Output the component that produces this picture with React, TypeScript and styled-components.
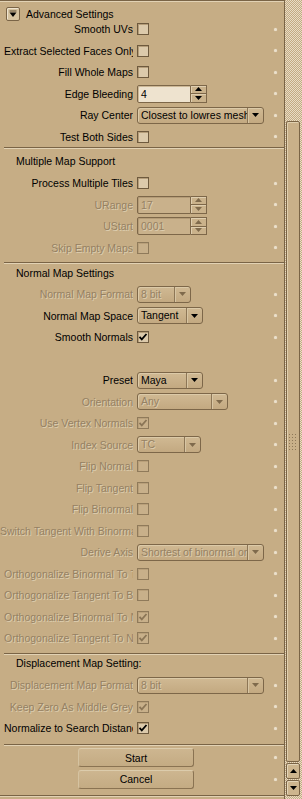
import React from 'react';
import styled, { createGlobalStyle, css } from 'styled-components';

const BG = '#c6ad85';
const DARK = '#7a6446';
const LIGHT = '#e2d2b4';
const DIS = '#958163';
const DIS_SHADOW = '#ddcdb0';

const GlobalStyle = createGlobalStyle`
  html, body { margin: 0; padding: 0; }
  body {
    background: ${BG};
    font-family: "Liberation Sans", Arial, sans-serif;
    font-size: 10.5px;
    color: #000;
    overflow: hidden;
  }
`;

const Window = styled.div`
  display: flex;
  width: 302px;
  height: 799px;
  background: ${BG};
  overflow: hidden;
`;

const Main = styled.div`
  width: 284px;
  flex: none;
  display: flex;
  flex-direction: column;
`;

const Edge = styled.div<{ $mt?: number; $ml?: number }>`
  flex: none;
  height: 0;
  border-top: 1px solid ${DARK};
  border-bottom: 1px solid ${LIGHT};
  margin-top: ${(p) => p.$mt ?? 0}px;
  margin-left: ${(p) => p.$ml ?? 0}px;
`;

const CollapseHeader = styled.div`
  flex: none;
  height: 21.5px;
  margin-top: 1px;
  margin-bottom: -6.25px;
  display: flex;
  align-items: center;
  gap: 6px;
  padding-left: 6px;
`;

const CollapseButton = styled.span`
  width: 14px;
  height: 14px;
  box-sizing: border-box;
  border: 1px solid ${DARK};
  border-radius: 2px;
  background: #d6c3a0;
  box-shadow: inset 1px 1px 0 #efe4cf;
  display: flex;
  align-items: center;
  justify-content: center;
`;

const SectionTitle = styled.div<{ $mt?: number }>`
  flex: none;
  height: 17px;
  margin-top: ${(p) => p.$mt ?? 0}px;
  padding-left: 16px;
  display: flex;
  align-items: center;
`;

const RowList = styled.div<{ $mt?: number }>`
  flex: none;
  display: flex;
  flex-direction: column;
  margin-top: ${(p) => p.$mt ?? 0}px;
`;

const Row = styled.div`
  height: 21.5px;
  display: grid;
  grid-template-columns: 129px 1fr 3px;
  column-gap: 4px;
  padding: 0 7px 0 4px;
  align-items: center;
`;

const ButtonRow = styled.div`
  height: 21.5px;
  display: grid;
  grid-template-columns: 116px 1fr 3px;
  padding: 0 7px 0 78px;
  align-items: center;
`;

const disabledText = css`
  color: ${DIS};
  text-shadow: 1px 1px 0 ${DIS_SHADOW};
`;

const Label = styled.span<{ $disabled?: boolean; $bleed?: boolean }>`
  white-space: nowrap;
  overflow: hidden;
  text-align: right;
  line-height: 14px;
  margin-left: ${(p) => (p.$bleed ? -4 : 0)}px;
  ${(p) => p.$disabled && disabledText}
`;

const Dot = styled.span`
  width: 3px;
  height: 3px;
  border-radius: 50%;
  background: #ebe0cc;
  box-shadow: 0 0 1px #e6d9c1;
`;

const Box = styled.span<{ $disabled?: boolean }>`
  width: 12px;
  height: 12px;
  box-sizing: border-box;
  border: 1px solid ${(p) => (p.$disabled ? '#8f7a5a' : '#6e5a3e')};
  background: ${(p) => (p.$disabled ? '#c8b08a' : '#dccaab')};
  box-shadow: inset 1px 1px 0 ${(p) => (p.$disabled ? '#b9a07a' : '#b59d79')};
  display: flex;
  align-items: center;
  justify-content: center;
`;

const DropBox = styled.div<{ $w: number }>`
  width: ${(p) => p.$w}px;
  height: 17px;
  box-sizing: border-box;
  border: 1px solid #7d6749;
  border-radius: 3px;
  background: linear-gradient(#d0b993, #c3a981);
  box-shadow: inset 1px 1px 0 #dccaa8;
  display: flex;
  overflow: hidden;
`;

const DropText = styled.span<{ $disabled?: boolean }>`
  flex: 1;
  min-width: 0;
  white-space: nowrap;
  overflow: hidden;
  padding-left: 3px;
  line-height: 15px;
  ${(p) => p.$disabled && disabledText}
`;

const DropArrow = styled.span`
  width: 15px;
  flex: none;
  border-left: 1px solid #8d7656;
  box-shadow: inset 1px 0 0 #d8c6a4;
  display: flex;
  align-items: center;
  justify-content: center;
`;

const Spin = styled.div`
  display: flex;
  height: 18px;
`;

const SpinField = styled.div<{ $disabled?: boolean }>`
  width: 54px;
  box-sizing: border-box;
  border: 1px solid #7d6749;
  border-radius: 2px 0 0 2px;
  background: ${(p) => (p.$disabled ? '#c9b18b' : '#eee3cf')};
  box-shadow: inset 1px 1px 0 ${(p) => (p.$disabled ? '#b59c77' : '#cdb896')};
  padding-left: 3px;
  line-height: 16px;
  ${(p) => p.$disabled && disabledText}
`;

const SpinButtons = styled.div`
  width: 16px;
  display: flex;
  flex-direction: column;
`;

const SpinBtn = styled.span`
  flex: 1;
  box-sizing: border-box;
  border: 1px solid #7d6749;
  border-left: none;
  background: #cab28b;
  box-shadow: inset 1px 1px 0 #dfceaf;
  display: flex;
  align-items: center;
  justify-content: center;
  & + & { border-top: none; }
`;

const PushButton = styled.button`
  height: 19px;
  box-sizing: border-box;
  border: 1px solid #8a7352;
  border-top-color: #dcccac;
  border-left-color: #d5c3a1;
  border-radius: 3px;
  background: linear-gradient(#cdb690, #c4ab83);
  font: inherit;
  color: #000;
  padding: 0;
  line-height: 16px;
  text-align: center;
`;

const Spacer = styled.div`
  height: 21.5px;
`;

const ScrollBar = styled.div`
  width: 18px;
  flex: none;
  box-sizing: border-box;
  border-left: 1px solid ${DARK};
  background: repeating-conic-gradient(#e8dcc6 0 25%, #c3aa82 0 50%) 0 0 / 2px 2px;
  display: flex;
  flex-direction: column;
  padding: 121px 2px 3px 1px;
`;

const Thumb = styled.div`
  flex: 1;
  box-sizing: border-box;
  border: 1px solid ${DARK};
  border-radius: 2px;
  background: #c9b089;
  box-shadow: inset 1px 1px 0 #e0cfae;
  display: flex;
  align-items: center;
  justify-content: center;
`;

const Grip = styled.span`
  width: 10px;
  height: 18px;
  background: radial-gradient(circle, #8e7858 0.7px, transparent 0.9px) 0 0 / 3px 3px;
`;

const ScrollBtn = styled.div`
  height: 16px;
  margin-top: 1px;
  box-sizing: border-box;
  border: 1px solid ${DARK};
  border-radius: 2px;
  background: #cdb58e;
  box-shadow: inset 1px 1px 0 #e4d5b8;
  display: flex;
  align-items: center;
  justify-content: center;
`;

const TriDown = ({ color = '#000' }: { color?: string }) => (
  <svg width="7" height="4" viewBox="0 0 7 4">
    <polygon points="0,0 7,0 3.5,4" fill={color} />
  </svg>
);

const TriUp = ({ color = '#000' }: { color?: string }) => (
  <svg width="7" height="4" viewBox="0 0 7 4">
    <polygon points="0,4 7,4 3.5,0" fill={color} />
  </svg>
);

const Check = ({ disabled }: { disabled?: boolean }) => (
  <svg width="10" height="10" viewBox="0 0 10 10">
    <polyline
      points="1.5,4.8 3.8,7.3 8.5,2"
      fill="none"
      stroke={disabled ? '#8a7556' : '#000'}
      strokeWidth="1.8"
    />
  </svg>
);

const CheckBox = ({ checked, disabled }: { checked?: boolean; disabled?: boolean }) => (
  <Box $disabled={disabled}>{checked && <Check disabled={disabled} />}</Box>
);

const Dropdown = ({ w, value, disabled }: { w: number; value: string; disabled?: boolean }) => (
  <DropBox $w={w}>
    <DropText $disabled={disabled}>{value}</DropText>
    <DropArrow>
      <TriDown color={disabled ? '#7f6a4c' : '#000'} />
    </DropArrow>
  </DropBox>
);

const Spinner = ({ value, disabled }: { value: string; disabled?: boolean }) => (
  <Spin>
    <SpinField $disabled={disabled}>{value}</SpinField>
    <SpinButtons>
      <SpinBtn>
        <TriUp color={disabled ? '#7f6a4c' : '#000'} />
      </SpinBtn>
      <SpinBtn>
        <TriDown color={disabled ? '#7f6a4c' : '#000'} />
      </SpinBtn>
    </SpinButtons>
  </Spin>
);

type Ctl = React.ReactNode;

const ControlCell = styled.span`
  display: flex;
`;

const Field = ({
  label,
  disabled,
  bleed,
  children,
}: {
  label: string;
  disabled?: boolean;
  bleed?: boolean;
  children?: Ctl;
}) => (
  <Row>
    <Label $disabled={disabled} $bleed={bleed}>{label}</Label>
    <ControlCell>{children}</ControlCell>
    <Dot />
  </Row>
);

export default function App() {
  return (
    <>
      <GlobalStyle />
      <Window>
        <Main>
          <Edge />
          <CollapseHeader>
            <CollapseButton>
              <svg width="10" height="8" viewBox="0 0 10 8">
                <line x1="1.5" y1="1" x2="8.5" y2="1" stroke="#5b4a33" strokeWidth="1" />
                <polygon points="1.5,2.5 8.5,2.5 5,7" fill="#000" />
              </svg>
            </CollapseButton>
            <span>Advanced Settings</span>
          </CollapseHeader>
          <RowList>
            <Field label="Smooth UVs"><CheckBox /></Field>
            <Field label="Extract Selected Faces Only"><CheckBox /></Field>
            <Field label="Fill Whole Maps"><CheckBox /></Field>
            <Field label="Edge Bleeding"><Spinner value="4" /></Field>
            <Field label="Ray Center"><Dropdown w={127} value="Closest to lowres mesh" /></Field>
            <Field label="Test Both Sides"><CheckBox /></Field>
          </RowList>
          <Edge $ml={4} />

          <SectionTitle $mt={3.25}>Multiple Map Support</SectionTitle>
          <RowList $mt={2.75}>
            <Field label="Process Multiple Tiles"><CheckBox /></Field>
            <Field label="URange" disabled><Spinner value="17" disabled /></Field>
            <Field label="UStart" disabled><Spinner value="0001" disabled /></Field>
            <Field label="Skip Empty Maps" disabled><CheckBox disabled /></Field>
          </RowList>
          <Edge $mt={3.75} $ml={4} />

          <SectionTitle>Normal Map Settings</SectionTitle>
          <RowList $mt={2.5}>
            <Field label="Normal Map Format" disabled><Dropdown w={54} value="8 bit" disabled /></Field>
            <Field label="Normal Map Space"><Dropdown w={66} value="Tangent" /></Field>
            <Field label="Smooth Normals"><CheckBox checked /></Field>
            <Spacer />
            <Field label="Preset"><Dropdown w={66} value="Maya" /></Field>
            <Field label="Orientation" disabled><Dropdown w={91} value="Any" disabled /></Field>
            <Field label="Use Vertex Normals" disabled><CheckBox checked disabled /></Field>
            <Field label="Index Source" disabled><Dropdown w={64} value="TC" disabled /></Field>
            <Field label="Flip Normal" disabled><CheckBox disabled /></Field>
            <Field label="Flip Tangent" disabled><CheckBox disabled /></Field>
            <Field label="Flip Binormal" disabled><CheckBox disabled /></Field>
            <Field label="Switch Tangent With Binormal" disabled bleed><CheckBox disabled /></Field>
            <Field label="Derive Axis" disabled><Dropdown w={127} value="Shortest of binormal or tangent" disabled /></Field>
            <Field label="Orthogonalize Binormal To Tangent" disabled><CheckBox disabled /></Field>
            <Field label="Orthogonalize Tangent To Binormal" disabled><CheckBox disabled /></Field>
            <Field label="Orthogonalize Binormal To Normal" disabled><CheckBox checked disabled /></Field>
            <Field label="Orthogonalize Tangent To Normal" disabled><CheckBox checked disabled /></Field>
          </RowList>
          <Edge $mt={3.5} $ml={4} />

          <SectionTitle>Displacement Map Setting:</SectionTitle>
          <RowList $mt={2.75}>
            <Field label="Displacement Map Format" disabled><Dropdown w={127} value="8 bit" disabled /></Field>
            <Field label="Keep Zero As Middle Grey" disabled><CheckBox checked disabled /></Field>
            <Field label="Normalize to Search Distance"><CheckBox checked /></Field>
          </RowList>
          <Edge $mt={5.25} $ml={4} />

          <RowList $mt={1}>
            <ButtonRow>
              <PushButton>Start</PushButton>
              <span />
              <Dot />
            </ButtonRow>
            <ButtonRow>
              <PushButton>Cancel</PushButton>
              <span />
              <Dot />
            </ButtonRow>
          </RowList>
          <Edge $mt={5} />
        </Main>
        <ScrollBar>
          <Thumb>
            <Grip />
          </Thumb>
          <ScrollBtn>
            <TriUp />
          </ScrollBtn>
          <ScrollBtn>
            <TriDown />
          </ScrollBtn>
        </ScrollBar>
      </Window>
    </>
  );
}
